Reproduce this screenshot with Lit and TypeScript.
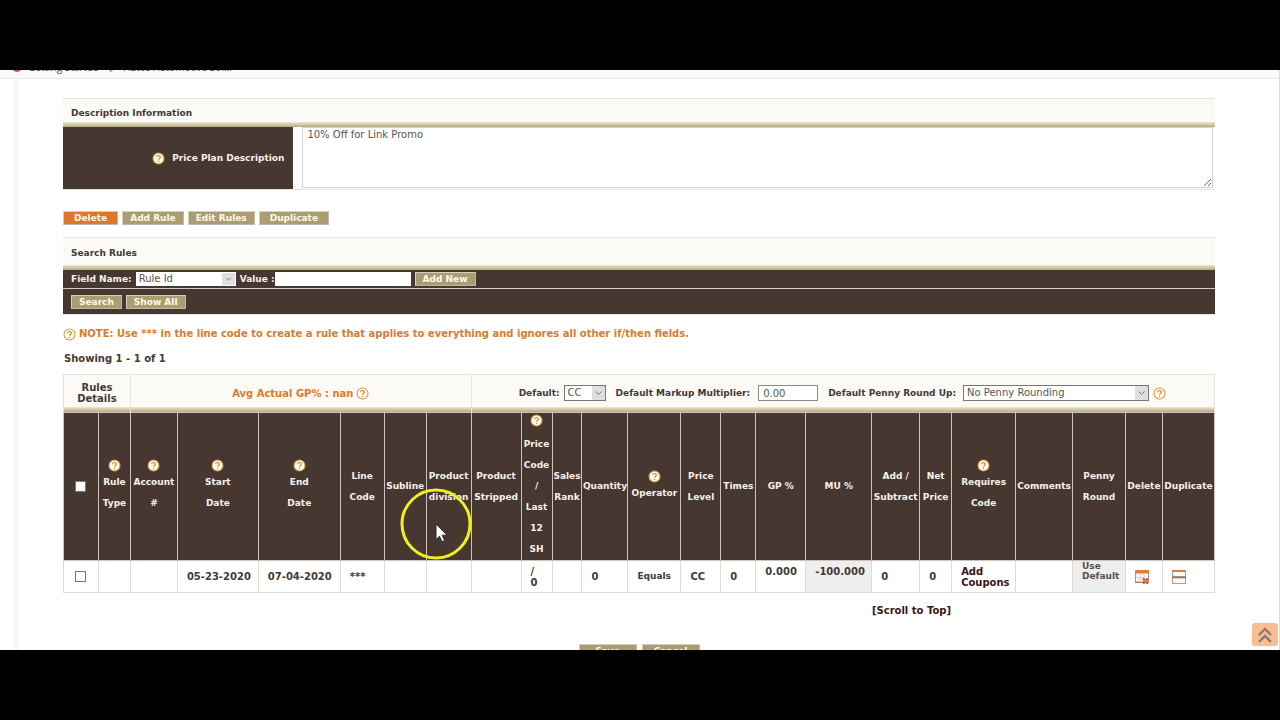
import { LitElement, html, css, nothing } from "lit";
import { customElement } from "lit/decorators.js";

interface Column {
  width: number;
  lines: string[];
  help?: boolean;
}

const COLUMNS: Column[] = [
  { width: 35, lines: [] },
  { width: 32, lines: ["Rule", "Type"], help: true },
  { width: 47, lines: ["Account", "#"], help: true },
  { width: 81, lines: ["Start", "Date"], help: true },
  { width: 82, lines: ["End", "Date"], help: true },
  { width: 44, lines: ["Line", "Code"] },
  { width: 42, lines: ["Subline"] },
  { width: 45, lines: ["Product", "division"] },
  { width: 50, lines: ["Product", "Stripped"] },
  { width: 31, lines: ["Price", "Code", "/", "Last", "12", "SH"], help: true },
  { width: 30, lines: ["Sales", "Rank"] },
  { width: 46, lines: ["Quantity"] },
  { width: 53, lines: ["Operator"], help: true },
  { width: 40, lines: ["Price", "Level"] },
  { width: 35, lines: ["Times"] },
  { width: 50, lines: ["GP %"] },
  { width: 66, lines: ["MU %"] },
  { width: 48, lines: ["Add /", "Subtract"] },
  { width: 32, lines: ["Net", "Price"] },
  { width: 64, lines: ["Requires", "Code"], help: true },
  { width: 57, lines: ["Comments"] },
  { width: 53, lines: ["Penny", "Round"] },
  { width: 37, lines: ["Delete"] },
  { width: 52, lines: ["Duplicate"] },
];

const TOTAL_WIDTH = COLUMNS.reduce((sum, c) => sum + c.width, 0);

const helpIcon = () => html`<svg class="help" viewBox="0 0 14 14" aria-hidden="true">
  <circle cx="7" cy="7" r="5.9" fill="#fffdf8" stroke="#e39a3c" stroke-width="1.2" />
  <path d="M5 5.6C5 3.2 9 3.2 9 5.5C9 6.9 7 6.9 7 8.4M7 9.4V10.7" fill="none" stroke="#dc8227" stroke-width="1.3" />
</svg>`;

@customElement("app-root")
export class AppRoot extends LitElement {
  static styles = css`
    :host {
      display: flex;
      flex-direction: column;
      height: 100vh;
      background: #fff;
      color: #423a38;
      font: bold 10px/11px Verdana, "DejaVu Sans", sans-serif;
    }
    * { box-sizing: border-box; }
    .band { flex: none; height: 70px; background: #000; }
    .screen {
      flex: 1;
      min-height: 0;
      overflow: hidden;
      position: relative;
      border-right: 1px solid #dcdcdc;
    }
    .bookmarks {
      display: flex;
      align-items: flex-end;
      height: 9px;
      padding-left: 12px;
      background: #f9f9f9;
      border-bottom: 1px solid #e6e6e6;
      font: 10px/12px "Open Sans", "Noto Sans", sans-serif;
      color: #444;
      overflow: hidden;
    }
    .bookmarks span { display: flex; align-items: center; gap: 6px; margin-right: 9px; padding-bottom: 5px; }
    .bookmarks svg { width: 10px; height: 10px; }
    .page {
      margin-left: 14px;
      padding: 19px 64px 0 44px;
      border-left: 5px solid #f7f7f7;
    }
    .panel { border: 1px solid #e6e3dd; border-width: 1px 0; }
    .panel-head {
      height: 28px;
      padding: 8px 8px 0;
      margin: 0;
      font-size: 9px;
      line-height: 13px;
      background: linear-gradient(#ece6d6, #b5a981) bottom / 100% 5px no-repeat, #fbfaf6;
    }
    .search .panel-head { height: 32px; padding-top: 9px; }
    .description { display: flex; height: 62px; }
    .description label {
      flex: 0 0 20%;
      display: flex;
      align-items: center;
      justify-content: flex-end;
      gap: 7px;
      padding-right: 9px;
      background: #463730;
      color: #f6f1ea;
      font-size: 9px;
    }
    .description textarea {
      flex: 1;
      margin: 0 2px 1px 9px;
      padding: 0 4px;
      border: 1px solid #d3d3d3;
      font: 10px/13px Verdana, "DejaVu Sans", sans-serif;
      color: #555;
      resize: vertical;
      background: #fff;
    }
    button {
      height: 14px;
      padding: 0 7px;
      border: 1px solid #d5cfbe;
      border-right-color: #bdb8a9;
      border-bottom-color: #bdb8a9;
      border-radius: 0;
      background: #aa9d72;
      color: #fffae8;
      font: inherit;
      font-size: 9px;
      line-height: 12px;
      white-space: nowrap;
    }
    button.wide { padding: 0 10px; }
    button.danger { background: #e07628; }
    .actions { display: flex; gap: 4px; margin: 21px 0 12px; }
    .search-row {
      display: flex;
      align-items: center;
      height: 19px;
      padding-left: 8px;
      background: #463730;
      color: #f6f1ea;
      border-bottom: 1px solid #d5cdc6;
      font-size: 9px;
    }
    .search-row.buttons { height: 25px; gap: 4px; border-bottom: 0; }
    .search-row .field { height: 14px; border: 0; width: 136px; }
    .search-row .select { width: 100px; height: 14px; margin: 0 4px; }
    .search-row .select select { border-color: #fff; padding-left: 2px; }
    .search-row button { margin-left: 4px; }
    .search-row.buttons button { margin-left: 0; }
    input.field {
      padding: 0 4px;
      border: 1px solid #8a8a8a;
      border-radius: 0;
      background: #fff;
      color: #555;
      font: 10px/12px Verdana, "DejaVu Sans", sans-serif;
    }
    .select { position: relative; display: block; }
    .select select {
      display: block;
      width: 100%;
      height: 100%;
      appearance: none;
      margin: 0;
      padding: 0 14px 0 3px;
      border: 1px solid #777;
      border-radius: 0;
      background: #fff;
      color: #555;
      font: 10px/12px Verdana, "DejaVu Sans", sans-serif;
    }
    .select svg {
      position: absolute;
      top: 1px;
      right: 1px;
      width: 13px;
      height: calc(100% - 2px);
      background: #dedede;
      pointer-events: none;
    }
    .help { width: 13px; height: 13px; flex: none; }
    .note { display: flex; align-items: center; gap: 3px; margin: 12px 0 0; color: #dc7a2b; line-height: 14px; }
    .count { margin: 12px 0 9px; padding-left: 1px; line-height: 12px; }
    table { width: 100%; table-layout: fixed; border-collapse: collapse; }
    th, td { padding: 0; border: 1px solid #dedad6; white-space: nowrap; }
    .summary th {
      height: 38px;
      border-color: #e6e3dd;
      border-bottom: 0;
      background: linear-gradient(#ece6d6, #b5a981) bottom / 100% 5px no-repeat, #fbfaf6;
      padding-bottom: 1px;
    }
    .avg, .defaults { display: flex; align-items: center; justify-content: center; gap: 3px; }
    .avg { color: #dc7a2b; }
    .defaults { justify-content: flex-end; padding-right: 48px; gap: 4px; font-size: 9px; }
    .defaults .gap { margin-right: 6px; }
    .defaults .select, .defaults .field { height: 16px; }
    .defaults .code { width: 42px; }
    .defaults .field { width: 60px; margin-left: 4px; }
    .defaults .rounding { width: 186px; margin-left: 3px; }
    .columns th {
      height: 148px;
      background: #463730;
      color: #f6f1ea;
      font-size: 9px;
      line-height: 21px;
      border-color: #cdc3bb;
    }
    .columns th .label { display: flex; flex-direction: column; align-items: center; }
    .columns th .tall { height: 147px; justify-content: flex-start; padding-top: 1px; }
    .columns th .tall .help { margin-bottom: 7px; }
    td { height: 32px; padding-left: 9px; text-align: left; }
    td.check { padding: 0; }
    td.text, td.small { font-size: 9px; }
    td.top { padding-bottom: 11px; }
    td.shade { background: #eee; }
    td.small { color: #57504e; line-height: 10px; }
    .check input {
      display: block;
      appearance: none;
      width: 11px;
      height: 11px;
      margin: 0 auto;
      border: 1px solid #777;
      background: #fff;
    }
    a { color: #3a1515; text-decoration: none; }
    td svg { display: block; width: 14px; height: 14px; }
    .footer { display: flex; justify-content: flex-end; padding: 12px 264px 0 0; line-height: 12px; }
    .save { display: flex; justify-content: center; gap: 5px; padding-top: 27px; }
    .save button { min-width: 58px; }
    .to-top {
      position: absolute;
      right: 1px;
      bottom: 4px;
      display: grid;
      place-items: center;
      width: 26px;
      height: 23px;
      border-radius: 3px;
      background: #f9bd92;
    }
    .to-top svg { width: 16px; height: 18px; }
    .pointer { position: absolute; left: 400px; top: 418px; width: 72px; height: 72px; pointer-events: none; }
  `;

  private select(id: string, value: string, cls = "") {
    return html`<span class="select ${cls}">
      <select id=${id}><option>${value}</option></select>
      <svg viewBox="0 0 13 14" aria-hidden="true"><path d="M3.5 5.5L6.5 8.5L9.5 5.5" fill="none" stroke="#777" stroke-width="1" /></svg>
    </span>`;
  }

  private heading(column: Column) {
    if (!column.lines.length) {
      return html`<th class="check"><input type="checkbox" aria-label="Select all rules" /></th>`;
    }
    return html`<th scope="col">
      <span class="label ${column.lines.length > 2 ? "tall" : ""}">
        ${column.help ? helpIcon() : nothing}${column.lines.map((line) => html`<span>${line}</span>`)}
      </span>
    </th>`;
  }

  render() {
    return html`
      <div class="band"></div>
      <main class="screen">
        <div class="bookmarks">
          <span><svg viewBox="0 0 10 10"><circle cx="5" cy="5" r="5" fill="#e8413c" /><circle cx="5" cy="4" r="2" fill="#7a3bc0" /></svg>Getting Started</span>
          <span><svg viewBox="0 0 10 10"><path d="M2 10L5 2L9 5L3 9" fill="none" stroke="#777" /></svg>Autos Automotive Sol…</span>
        </div>
        <div class="page">
          <section class="panel">
            <h2 class="panel-head">Description Information</h2>
            <div class="description">
              <label for="description">${helpIcon()}Price Plan Description</label>
              <textarea id="description" .value=${"10% Off for Link Promo"}></textarea>
            </div>
          </section>
          <div class="actions">
            <button class="danger wide">Delete</button>
            <button>Add Rule</button>
            <button>Edit Rules</button>
            <button class="wide">Duplicate</button>
          </div>
          <section class="panel search">
            <h2 class="panel-head">Search Rules</h2>
            <div class="search-row">
              <label for="field-name">Field Name:</label>
              ${this.select("field-name", "Rule Id")}
              <label for="value">Value :</label>
              <input class="field" id="value" type="text" />
              <button>Add New</button>
            </div>
            <div class="search-row buttons">
              <button>Search</button>
              <button>Show All</button>
            </div>
          </section>
          <p class="note">${helpIcon()}NOTE: Use *** in the line code to create a rule that applies to everything and ignores all other if/then fields.</p>
          <p class="count">Showing 1 - 1 of 1</p>
          <table>
            <colgroup>${COLUMNS.map((c) => html`<col style="width:${(c.width / TOTAL_WIDTH) * 100}%" />`)}</colgroup>
            <thead>
              <tr class="summary">
                <th colspan="2">Rules<br />Details</th>
                <th colspan="6"><span class="avg">Avg Actual GP% : nan ${helpIcon()}</span></th>
                <th colspan="16">
                  <span class="defaults">
                    <label for="code">Default:</label>${this.select("code", "CC", "code gap")}
                    <label for="markup">Default Markup Multiplier:</label>
                    <input class="field gap" id="markup" type="text" value="0.00" />
                    <label for="rounding">Default Penny Round Up:</label>${this.select("rounding", "No Penny Rounding", "rounding")}${helpIcon()}
                  </span>
                </th>
              </tr>
              <tr class="columns">${COLUMNS.map((c) => this.heading(c))}</tr>
            </thead>
            <tbody>
              <tr>
                <td class="check"><input type="checkbox" aria-label="Select rule" /></td>
                <td></td>
                <td></td>
                <td>05-23-2020</td>
                <td>07-04-2020</td>
                <td>***</td>
                <td></td>
                <td></td>
                <td></td>
                <td>/<br />0</td>
                <td></td>
                <td>0</td>
                <td class="text">Equals</td>
                <td>CC</td>
                <td>0</td>
                <td class="top">0.000</td>
                <td class="top shade">-100.000</td>
                <td>0</td>
                <td>0</td>
                <td><a href="#coupons">Add<br />Coupons</a></td>
                <td></td>
                <td class="top shade small">Use<br />Default</td>
                <td>
                  <a href="#delete" aria-label="Delete rule"><svg viewBox="0 0 14 14">
                    <rect x=".5" y="1" width="13" height="11" fill="#fbf8f3" stroke="#a89c91" />
                    <rect x="0" y="0" width="14" height="3.5" fill="#d7803f" />
                    <path d="M1 7.5H10M5 4V12M9 4V8" stroke="#ddd3c9" />
                    <path d="M0 12.5H8" stroke="#8f8880" />
                    <path d="M8 8.5L13 13.5M13 8.5L8 13.5" stroke="#c2572e" stroke-width="2.4" />
                    <rect x="9.500" y="10" width="2" height="2" fill="#e8a03c" />
                  </svg></a>
                </td>
                <td>
                  <a href="#duplicate" aria-label="Duplicate rule"><svg viewBox="0 0 14 14">
                    <rect x=".5" y=".5" width="13" height="6" fill="#fdfaf5" stroke="#c99a76" />
                    <rect x=".5" y="7.5" width="13" height="6" fill="#fdfaf5" stroke="#c99a76" />
                    <path d="M0 1H14" stroke="#dc7f3c" stroke-width="2" />
                    <path d="M0 7.6H14" stroke="#c0683f" stroke-width="1.4" />
                    <path d="M0 6.5H14" stroke="#8f9486" />
                  </svg></a>
                </td>
              </tr>
            </tbody>
          </table>
          <div class="footer"><a href="#top">[Scroll to Top]</a></div>
          <div class="save"><button>Save</button><button>Cancel</button></div>
        </div>
        <a class="to-top" href="#top" aria-label="Back to top"><svg viewBox="0 0 16 18"><path d="M2 9L8 3L14 9M2 16L8 10L14 16" fill="none" stroke="#8c7b70" stroke-width="2.4" /></svg></a>
        <svg class="pointer" viewBox="0 0 72 72" aria-hidden="true">
          <circle cx="36" cy="36" r="34" fill="none" stroke="#eef022" stroke-width="3" />
          <path d="M36 36V51.5L39.5 48.2L42 53.7L44.6 52.5L42.2 47.2H47Z" fill="#fff" stroke="#222" stroke-width=".9" />
        </svg>
      </main>
      <div class="band"></div>
    `;
  }
}
